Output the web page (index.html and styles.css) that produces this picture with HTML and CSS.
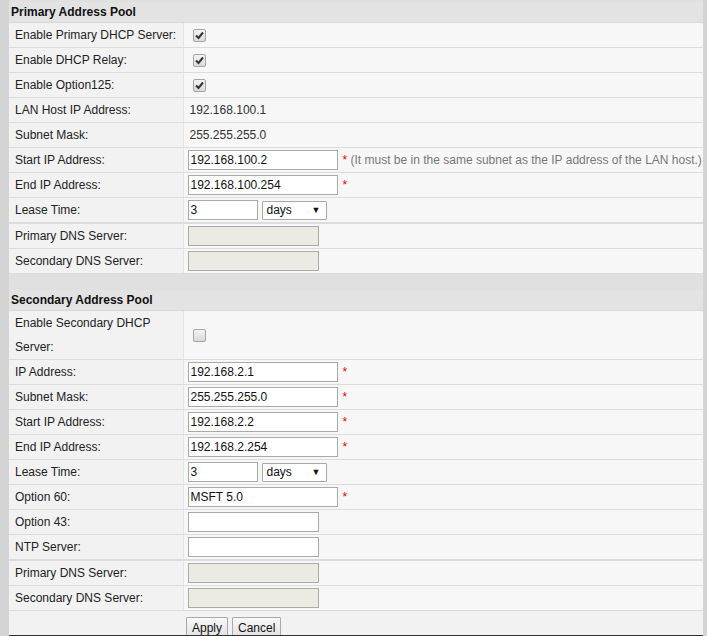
FILE: index.html
```html
<!DOCTYPE html>
<html>
<head>
<meta charset="utf-8">
<link rel="stylesheet" href="styles.css">
</head>
<body>
<div class="page">
  <table class="pool">
    <colgroup><col class="c1"><col></colgroup>
    <tr class="head"><td colspan="2">Primary Address Pool</td></tr>
    <tr><td class="lbl">Enable Primary DHCP Server:</td><td class="val"><span class="cb"><svg width="11" height="11" viewBox="0 0 11 11"><path d="M2 5.5 L4.5 8 L9 2.5" fill="none" stroke="#333" stroke-width="2"/></svg></span></td></tr>
    <tr><td class="lbl">Enable DHCP Relay:</td><td class="val"><span class="cb"><svg width="11" height="11" viewBox="0 0 11 11"><path d="M2 5.5 L4.5 8 L9 2.5" fill="none" stroke="#333" stroke-width="2"/></svg></span></td></tr>
    <tr><td class="lbl">Enable Option125:</td><td class="val"><span class="cb"><svg width="11" height="11" viewBox="0 0 11 11"><path d="M2 5.5 L4.5 8 L9 2.5" fill="none" stroke="#333" stroke-width="2"/></svg></span></td></tr>
    <tr><td class="lbl">LAN Host IP Address:</td><td class="val"><span class="txt">192.168.100.1</span></td></tr>
    <tr><td class="lbl">Subnet Mask:</td><td class="val"><span class="txt">255.255.255.0</span></td></tr>
    <tr><td class="lbl">Start IP Address:</td><td class="val"><input class="in wide" value="192.168.100.2"><span class="req">*</span> <span class="note">(It must be in the same subnet as the IP address of the LAN host.)</span></td></tr>
    <tr><td class="lbl">End IP Address:</td><td class="val"><input class="in wide" value="192.168.100.254"><span class="req">*</span></td></tr>
    <tr><td class="lbl">Lease Time:</td><td class="val"><input class="in short" value="3"><span class="sel">days<span class="arr">▼</span></span></td></tr>
    <tr class="sep"><td class="lbl">Primary DNS Server:</td><td class="val"><input class="in mid dis" disabled></td></tr>
    <tr><td class="lbl">Secondary DNS Server:</td><td class="val"><input class="in mid dis" disabled></td></tr>
  </table>
  <div class="gap"></div>
  <table class="pool">
    <colgroup><col class="c1"><col></colgroup>
    <tr class="head"><td colspan="2">Secondary Address Pool</td></tr>
    <tr class="tall"><td class="lbl">Enable Secondary DHCP Server:</td><td class="val"><span class="cb off"></span></td></tr>
    <tr><td class="lbl">IP Address:</td><td class="val"><input class="in wide" value="192.168.2.1"><span class="req">*</span></td></tr>
    <tr><td class="lbl">Subnet Mask:</td><td class="val"><input class="in wide" value="255.255.255.0"><span class="req">*</span></td></tr>
    <tr><td class="lbl">Start IP Address:</td><td class="val"><input class="in wide" value="192.168.2.2"><span class="req">*</span></td></tr>
    <tr><td class="lbl">End IP Address:</td><td class="val"><input class="in wide" value="192.168.2.254"><span class="req">*</span></td></tr>
    <tr><td class="lbl">Lease Time:</td><td class="val"><input class="in short" value="3"><span class="sel">days<span class="arr">▼</span></span></td></tr>
    <tr><td class="lbl">Option 60:</td><td class="val"><input class="in wide" value="MSFT 5.0"><span class="req">*</span></td></tr>
    <tr><td class="lbl">Option 43:</td><td class="val"><input class="in mid"></td></tr>
    <tr><td class="lbl">NTP Server:</td><td class="val"><input class="in mid"></td></tr>
    <tr class="sep"><td class="lbl">Primary DNS Server:</td><td class="val"><input class="in mid dis" disabled></td></tr>
    <tr><td class="lbl">Secondary DNS Server:</td><td class="val"><input class="in mid dis" disabled></td></tr>
    <tr class="btns"><td class="lbl"></td><td class="val"><button class="btn">Apply</button><button class="btn">Cancel</button></td></tr>
  </table>
</div>
</body>
</html>
```
FILE: styles.css
```css
html, body {
  margin: 0;
  padding: 0;
}
body {
  background: #d4d4d4;
  font-family: "Liberation Sans", Arial, sans-serif;
  font-size: 12px;
  color: #1a1a1a;
}
.page {
  margin: 0 4px 0 9px;
  padding-top: 2px;
  background: #e0e0e0;
  height: 633px;
  overflow: hidden;
  border-bottom: 1px solid #333;
}
.pool {
  width: 100%;
  table-layout: fixed;
  border-collapse: collapse;
  border-spacing: 0;
}
.c1 {
  width: 174px;
}
.pool td {
  padding: 0;
  height: 24px;
  border-bottom: 1px solid #dcdcdc;
  vertical-align: middle;
}
.head td {
  background: #e3e3e3;
  font-weight: bold;
  height: 20px;
  padding-left: 2px;
  color: #111;
  border-bottom: 1px solid #d8d8d8;
}
.lbl {
  padding-left: 6px !important;
  background: #f2f2f2;
  border-right: 1px solid #e4e4e4;
  color: #222;
}
.val {
  background: #f7f7f7;
  padding-left: 4px !important;
  white-space: nowrap;
  color: #222;
}
.tall td {
  height: 46px;
  line-height: 24px;
}
.sep td {
  border-top: 2px solid #dcdcdc;
}
.txt {
  padding-left: 2px;
  color: #333;
}
.cb {
  display: inline-block;
  box-sizing: border-box;
  width: 13px;
  height: 13px;
  margin-left: 5px;
  border: 1px solid #a5a5a5;
  border-radius: 2px;
  background: linear-gradient(#f4f4f4, #dadada);
  vertical-align: middle;
  line-height: 0;
}
.cb svg {
  display: block;
}
.in {
  box-sizing: border-box;
  height: 20px;
  margin: 0;
  padding: 0 2px;
  border: 1px solid #a9a9a9;
  background: #fff;
  font-family: "Liberation Sans", Arial, sans-serif;
  font-size: 12px;
  color: #111;
  vertical-align: middle;
}
.wide { width: 150px; }
.mid { width: 131px; }
.short { width: 70px; }
.dis {
  background: #ebebe4;
  border-color: #aaa;
}
.req {
  color: #e00;
  margin-left: 5px;
  vertical-align: middle;
}
.note {
  color: #777;
  vertical-align: middle;
}
.sel {
  display: inline-flex;
  justify-content: space-between;
  align-items: center;
  box-sizing: border-box;
  width: 65px;
  height: 19px;
  margin-left: 4px;
  padding: 0 5px 0 4px;
  border: 1px solid #a9a9a9;
  border-radius: 1px;
  background: #fff;
  color: #111;
  vertical-align: middle;
}
.arr {
  font-size: 9px;
}
.btns td {
  height: 25px;
  border-bottom: none;
  vertical-align: top;
}
.btns .lbl {
  background: #f2f2f2;
  border-right: none;
}
.btns .val {
  background: #f2f2f2;
  padding-left: 3px !important;
  padding-top: 6px !important;
}
.btn {
  height: 21px;
  margin: 0 4px 0 0;
  padding: 0 5px;
  border: 1px solid #aaa;
  border-radius: 1px;
  background: linear-gradient(#f8f8f8, #e2e2e2);
  font-family: "Liberation Sans", Arial, sans-serif;
  font-size: 12px;
  color: #111;
}
.gap {
  height: 16px;
  background: #e0e0e0;
}
```
